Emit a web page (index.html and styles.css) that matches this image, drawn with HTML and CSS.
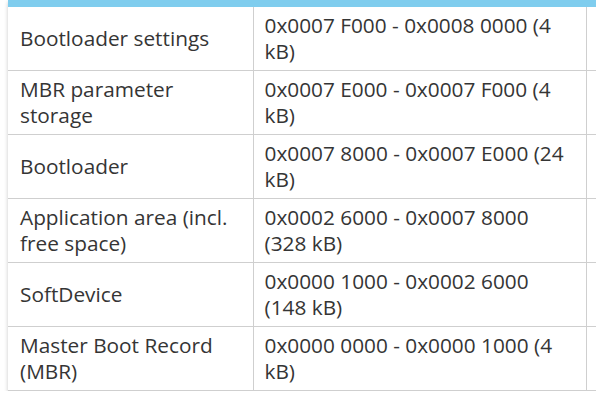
FILE: index.html
```html
<!DOCTYPE html>
<html>
<head>
<meta charset="utf-8">
<link rel="stylesheet" href="styles.css">
</head>
<body>
<div class="wrap">
<table class="mem">
<thead><tr><th class="c1"></th><th class="c2"></th><th class="c3"></th></tr></thead>
<tbody>
<tr><td>Bootloader settings</td><td>0x0007 F000 - 0x0008 0000 (4 kB)</td><td></td></tr>
<tr><td>MBR parameter storage</td><td>0x0007 E000 - 0x0007 F000 (4 kB)</td><td></td></tr>
<tr><td>Bootloader</td><td>0x0007 8000 - 0x0007 E000 (24 kB)</td><td></td></tr>
<tr><td>Application area (incl. free space)</td><td>0x0002 6000 - 0x0007 8000 (328 kB)</td><td></td></tr>
<tr><td>SoftDevice</td><td>0x0000 1000 - 0x0002 6000 (148 kB)</td><td></td></tr>
<tr><td>Master Boot Record (MBR)</td><td>0x0000 0000 - 0x0000 1000 (4 kB)</td><td></td></tr>
</tbody>
</table>
</div>
</body>
</html>
```
FILE: styles.css
```css
html, body {
  margin: 0;
  padding: 0;
  background: #fff;
  overflow: hidden;
}
.wrap {
  padding-left: 8px;
  width: 800px;
}
.mem {
  border-collapse: collapse;
  font-family: "Open Sans", sans-serif;
  font-size: 20.8px;
  line-height: 26px;
  color: #353535;
  box-shadow: 0 2px 4px rgba(0,0,0,0.22);
  table-layout: fixed;
  width: 740px;
}
.mem th {
  height: 7px;
  padding: 0;
  background: #7fcdee;
  border: 0;
}
.c1 { width: 245px; }
.c2 { width: 333px; }
.mem td {
  border: 1px solid #cfcfcf;
  padding: 5px 16px 6px 11px;
  height: 52px;
  vertical-align: middle;
  text-align: left;
}
.mem td:first-child { border-left: 0; padding-left: 12px; }
.mem tbody tr:first-child td { border-top: 0; }
```
